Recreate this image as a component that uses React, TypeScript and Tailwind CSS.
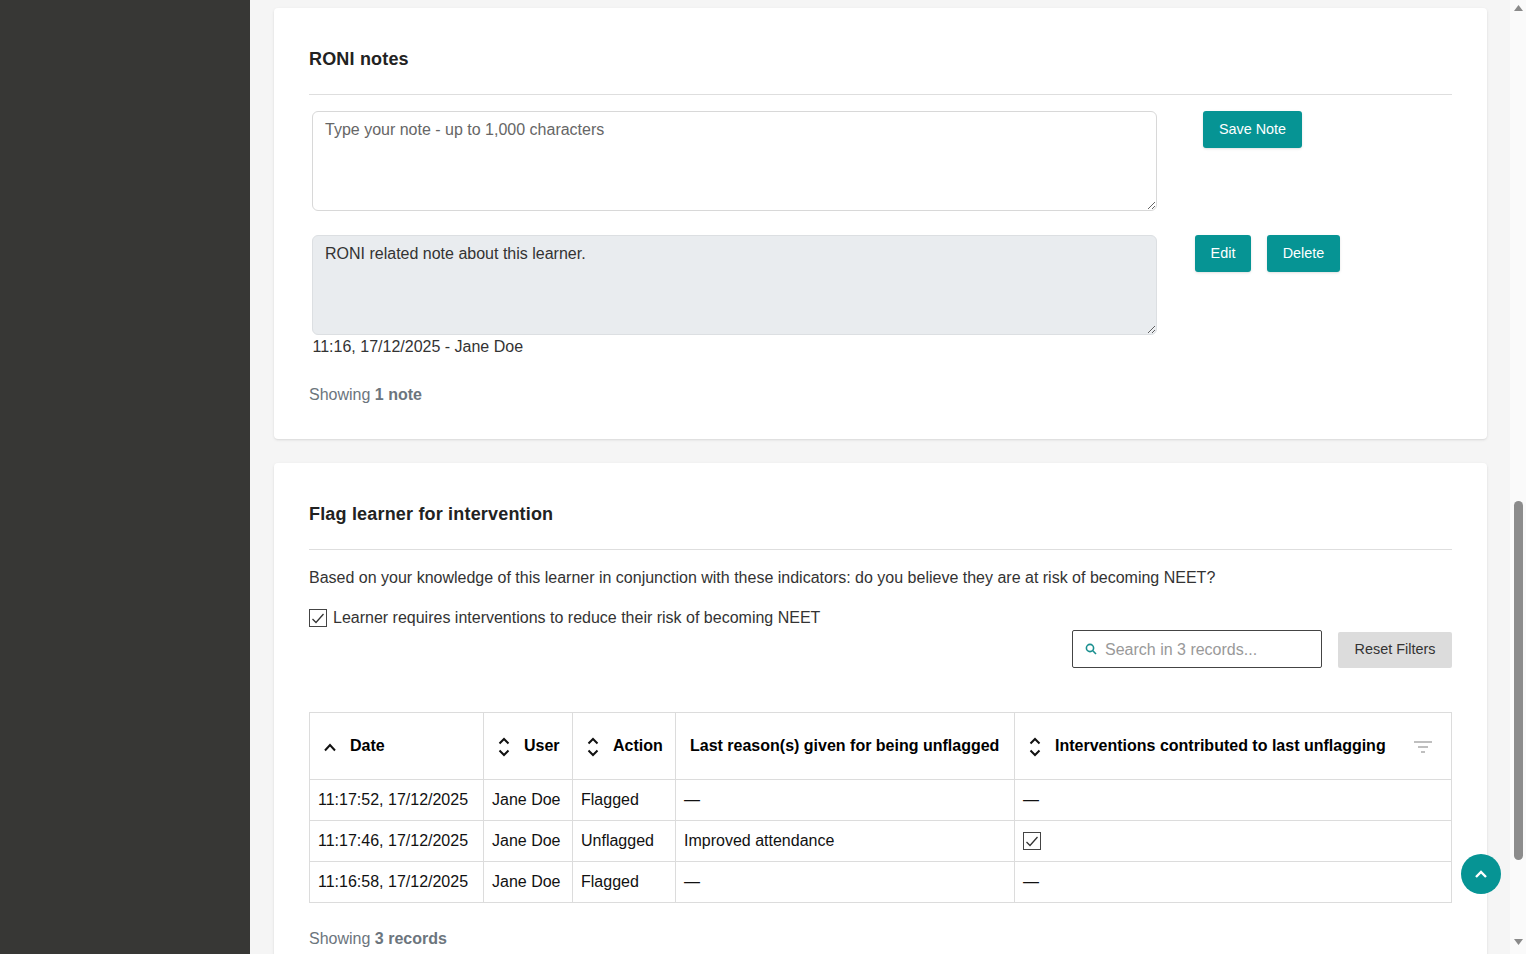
const Sort = ({ single = false }: { single?: boolean }) => (
  <svg width="12" height="24" viewBox="0 0 12 24" fill="none" stroke="#111" strokeWidth="2" className="shrink-0">
    {single ? (
      <path d="M1 16.5 6 11l5 5.5" />
    ) : (
      <>
        <path d="M1.5 9.5 6 5l4.5 4.5" />
        <path d="M1.5 16.5 6 21l4.5-4.5" />
      </>
    )}
  </svg>
);

const Tick = () => (
  <span className="flex h-[18px] w-[18px] shrink-0 items-center justify-center border border-[#444] bg-white">
    <svg width="14" height="14" viewBox="0 0 14 14" fill="none" stroke="#333" strokeWidth="1.3">
      <path d="M1.5 8 5 11.5 12.5 3" />
    </svg>
  </span>
);

const Btn = ({ children, className }: { children: string; className: string }) => (
  <button className={`h-[37px] rounded-[3px] bg-[#069494] text-center text-[14.4px] text-white shadow-sm ${className}`}>{children}</button>
);

const th = "h-[67px] border border-[#dcdcdc] px-2 text-left text-[16px] font-bold text-black";
const td = "h-[41px] border border-[#dcdcdc] px-2 text-left text-[16px] font-normal text-[#111]";

const rows = [
  ["11:17:52, 17/12/2025", "Jane Doe", "Flagged", "—", false],
  ["11:17:46, 17/12/2025", "Jane Doe", "Unflagged", "Improved attendance", true],
  ["11:16:58, 17/12/2025", "Jane Doe", "Flagged", "—", false],
] as const;

export default function App() {
  return (
    <div className="relative flex h-screen overflow-hidden bg-[#f5f5f5] font-['Liberation_Sans',Arial,sans-serif] text-[16px] text-[#333]">
      <aside className="w-[250px] shrink-0 bg-[#373735]" />
      <main className="flex min-w-0 flex-1 flex-col gap-6 pb-4 pl-6 pr-[23px] pt-2">
        <section className="shrink-0 rounded bg-white px-[35px] pb-[34px] pt-[41px] shadow-sm">
          <h2 className="text-[18px] font-bold leading-5 tracking-[0.18px] text-[#222]">RONI notes</h2>
          <hr className="mt-[25px] border-[#dedede]" />
          <div className="mt-4 flex items-start pl-[3px]">
            <textarea
              placeholder="Type your note - up to 1,000 characters"
              className="h-[100px] w-[845px] rounded-md border border-[#d8d8d8] bg-white px-3 py-2 text-[16px] leading-5 text-[#333] placeholder:text-[#666]"
            />
            <Btn className="ml-[46px] w-[99px]">Save Note</Btn>
          </div>
          <div className="mt-6 flex items-start pl-[3px]">
            <textarea
              readOnly
              value="RONI related note about this learner."
              className="h-[100px] w-[845px] rounded-md border border-[#dcdfe2] bg-[#e9ecef] px-3 py-2 text-[16px] leading-5 text-[#333]"
            />
            <Btn className="ml-[38px] w-[56px]">Edit</Btn>
            <Btn className="ml-4 w-[73px]">Delete</Btn>
          </div>
          <p className="mt-[2px] pl-[3.5px] leading-5">11:16, 17/12/2025 - Jane Doe</p>
          <p className="mt-7 leading-5 text-[#6c757d]">
            Showing <b>1 note</b>
          </p>
        </section>

        <section className="shrink-0 rounded bg-white px-[35px] pb-[35px] pt-[41px] shadow-sm">
          <h2 className="text-[18px] font-bold leading-5 tracking-[0.18px] text-[#222]">Flag learner for intervention</h2>
          <hr className="mt-[25px] border-[#dedede]" />
          <p className="mt-[18px] leading-5">
            Based on your knowledge of this learner in conjunction with these indicators: do you believe they are at risk of becoming NEET?
          </p>
          <label className="mt-5 flex h-5 items-center gap-[6px]">
            <Tick />
            <span>Learner requires interventions to reduce their risk of becoming NEET</span>
          </label>
          <div className="mt-[2px] flex items-end justify-end gap-4">
            <div className="flex h-[38px] w-[250px] items-center gap-2 rounded-[2px] border border-[#444] bg-white pl-3 text-[#999]">
              <svg width="12" height="12" viewBox="0 0 12 12" fill="none" stroke="#1a8f8f" strokeWidth="1.6">
                <circle cx="5" cy="5" r="3.6" />
                <path d="M7.8 7.8 11 11" />
              </svg>
              <span className="pt-px">Search in 3 records...</span>
            </div>
            <button className="h-9 w-[114px] rounded-[2px] bg-[#dcdcdc] text-[14.4px] text-[#333]">Reset Filters</button>
          </div>
          <table className="mt-11 w-[1142px] table-fixed border-collapse">
            <colgroup>
              <col className="w-[174px]" />
              <col className="w-[89px]" />
              <col className="w-[103px]" />
              <col className="w-[339px]" />
              <col className="w-[437px]" />
            </colgroup>
            <thead>
              <tr>
                <th className={th}>
                  <div className="flex items-center gap-[14px] pl-[6px]"><Sort single /><span>Date</span></div>
                </th>
                <th className={th}>
                  <div className="flex items-center gap-[14px] pl-[6px]"><Sort /><span>User</span></div>
                </th>
                <th className={th}>
                  <div className="flex items-center gap-[14px] pl-[6px]"><Sort /><span>Action</span></div>
                </th>
                <th className={`${th} pl-[14px]`}>Last reason(s) given for being unflagged</th>
                <th className={th}>
                  <div className="flex items-center pl-[6px]">
                    <Sort />
                    <span className="ml-[14px]">Interventions contributed to last unflagging</span>
                    <svg width="20" height="16" viewBox="0 0 20 16" fill="none" stroke="#aaa" strokeWidth="1.6" className="ml-[27px] mt-[2px]">
                      <path d="M1 3h18M5 8h10M8 13h4" />
                    </svg>
                  </div>
                </th>
              </tr>
            </thead>
            <tbody>
              {rows.map((r) => (
                <tr key={r[0]}>
                  <td className={td}>{r[0]}</td>
                  <td className={td}>{r[1]}</td>
                  <td className={td}>{r[2]}</td>
                  <td className={td}>{r[3]}</td>
                  <td className={td}>{r[4] ? <Tick /> : "—"}</td>
                </tr>
              ))}
            </tbody>
          </table>
          <p className="mt-[26px] leading-5 text-[#6c757d]">
            Showing <b>3 records</b>
          </p>
        </section>
      </main>
      <div className="flex w-4 shrink-0 flex-col items-center bg-[#fafafa]">
        <svg width="9" height="6" viewBox="0 0 9 6" className="mt-[5px] shrink-0" fill="#8a8a8a"><path d="M0 6 4.5 0 9 6z" /></svg>
        <div className="mt-[490px] h-[359px] w-[9px] shrink-0 rounded-full bg-[#8c8c8c]" />
        <svg width="9" height="6" viewBox="0 0 9 6" className="mt-[79px] shrink-0" fill="#8a8a8a"><path d="M0 0h9L4.5 6z" /></svg>
      </div>
      <button className="absolute left-[1461px] top-[854px] flex h-10 w-10 items-center justify-center rounded-full bg-[#069494]">
        <svg width="14" height="10" viewBox="0 0 14 10" fill="none" stroke="#fff" strokeWidth="2.4"><path d="M2 8 7 3l5 5" /></svg>
      </button>
    </div>
  );
}
